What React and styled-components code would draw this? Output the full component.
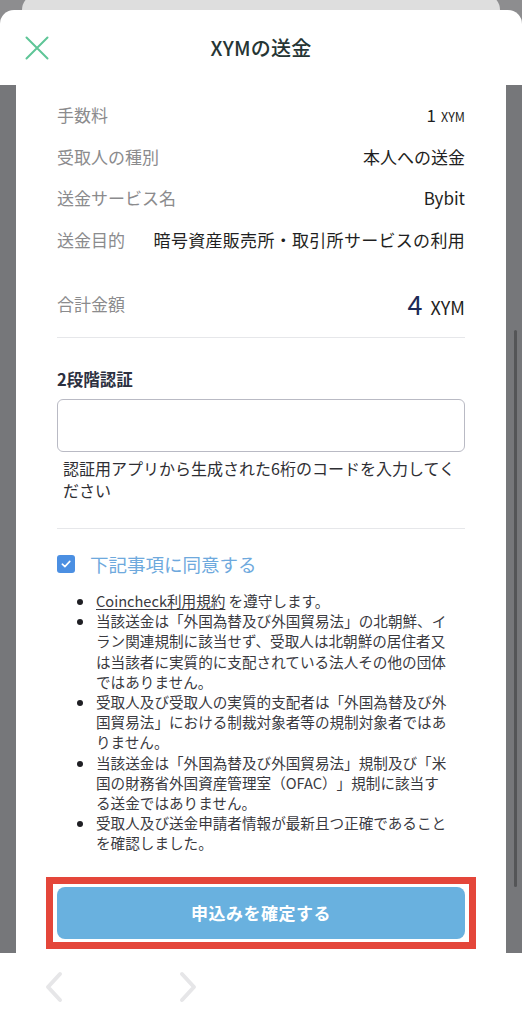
import React from "react";
import styled, { createGlobalStyle } from "styled-components";

const Global = createGlobalStyle`
  html, body { margin: 0; padding: 0; }
  body {
    font-family: "Noto Sans CJK JP", "Noto Sans", sans-serif;
    background: #8d8d8f;
    -webkit-font-smoothing: antialiased;
    text-spacing-trim: space-all;
  }
  * { box-sizing: border-box; }
`;

const Screen = styled.div`
  width: 522px;
  height: 1024px;
  overflow: hidden;
  display: flex;
  flex-direction: column;
  background: #8d8d8f;
`;

const Peek = styled.div`
  margin: -6px 22px 0;
  height: 16px;
  flex: none;
  background: #dedede;
  border-radius: 16px 16px 0 0;
`;

const Sheet = styled.div`
  flex: 1;
  display: flex;
  flex-direction: column;
  background: #fff;
  border-radius: 14px 14px 0 0;
  overflow: hidden;
`;

const Header = styled.header`
  height: 75px;
  flex: none;
  display: grid;
  grid-template-columns: 72px 1fr 72px;
  align-items: center;
`;

const CloseBtn = styled.button`
  border: 0;
  background: none;
  padding: 0 0 0 25px;
  display: flex;
  align-items: center;
  height: 100%;
  cursor: pointer;
`;

const Title = styled.h1`
  margin: 0;
  text-align: center;
  font-size: 20px;
  font-weight: 500;
  color: #263534;
  letter-spacing: 0.2px;
`;

const Body = styled.div`
  flex: 1;
  display: flex;
  min-height: 0;
`;

const Gutter = styled.div`
  width: 16px;
  flex: none;
  background: #76777a;
  position: relative;
`;

const ScrollThumb = styled.div`
  position: absolute;
  left: 8px;
  top: 245px;
  width: 3px;
  height: 557px;
  border-radius: 2px;
  background: #545557;
`;

const Content = styled.main`
  flex: 1;
  background: #fff;
  padding: 9px 41px 0;
  display: flex;
  flex-direction: column;
`;

const Row = styled.div`
  height: 41.5px;
  display: flex;
  align-items: center;
  justify-content: space-between;
  gap: 20px;
  font-size: 17px;
`;

const Label = styled.span`
  color: #8b8b8d;
  white-space: nowrap;
`;

const Value = styled.span`
  color: #1f1f22;
  white-space: nowrap;
  letter-spacing: ${(p) => (p.$tight ? "0.3px" : "0")};
`;

const Num = styled.span`
  font-size: ${(p) => p.$size || 17}px;
  color: ${(p) => p.$color || "#1f1f22"};
`;

const Unit = styled.span`
  font-size: ${(p) => p.$size || 12.5}px;
  margin-left: ${(p) => p.$gap || 5}px;
  color: #1f1f22;
`;

const TotalRow = styled(Row)`
  margin-top: 22px;
  height: 42px;
`;

const Divider = styled.hr`
  margin: ${(p) => p.$m || "13px 0 0"};
  border: 0;
  border-top: 1.5px solid #e6e7ea;
`;

const SectionTitle = styled.h2`
  margin: 29px 0 0;
  font-size: 16.5px;
  font-weight: 700;
  color: #2c3040;
  line-height: 24px;
`;

const CodeInput = styled.input`
  margin-top: 8px;
  height: 53px;
  width: 100%;
  border: 1.2px solid #b9bac4;
  border-radius: 6px;
  font-size: 17px;
  padding: 0 12px;
  outline: none;
`;

const Helper = styled.p`
  margin: 5px 0 0;
  padding: 0 6px;
  font-size: 16px;
  line-height: 22px;
  color: #2e2e33;
`;

const Agree = styled.label`
  margin-top: 20px;
  display: flex;
  align-items: center;
  gap: 15px;
  font-size: 18.5px;
  color: #6ea9dd;
  height: 30px;
`;

const Check = styled.span`
  width: 18px;
  height: 18px;
  border-radius: 3px;
  background: #4b8fe2;
  display: flex;
  align-items: center;
  justify-content: center;
  flex: none;
`;

const Terms = styled.ul`
  list-style: none;
  margin: 12px 0 0;
  padding: 0 0 0 20px;
  font-size: 14.6px;
  line-height: 20.2px;
  color: #3a3a3f;
`;

const Item = styled.li`
  display: flex;
  gap: 13px;
`;

const Dot = styled.span`
  width: 6px;
  height: 6px;
  border-radius: 50%;
  background: #1f1f24;
  flex: none;
  margin-top: 8px;
`;

const ItemText = styled.span`
  width: 24.02em;
`;

const Link = styled.a`
  color: inherit;
  text-decoration: underline;
  text-underline-offset: 2px;
`;

const Highlight = styled.div`
  margin: 23px -11px 0;
  border: 7px solid #e4463a;
  padding: 3px 4px;
`;

const Submit = styled.button`
  width: 100%;
  height: 52px;
  border: 0;
  border-radius: 8px;
  background: #69b1df;
  color: #fff;
  font-family: inherit;
  font-size: 17px;
  font-weight: 700;
  letter-spacing: 0.5px;
  cursor: pointer;
`;

const Footer = styled.footer`
  height: 71px;
  flex: none;
  background: #fff;
  display: flex;
  align-items: center;
  gap: 112px;
  padding: 0 0 4px 43px;
`;

const NavBtn = styled.button`
  border: 0;
  background: none;
  padding: 0;
  display: flex;
`;

const CloseIcon = () => (
  <svg width="24" height="24" viewBox="0 0 24 24" fill="none">
    <path d="M1.5 1.5 L22.5 22.5 M22.5 1.5 L1.5 22.5" stroke="#5ec597" strokeWidth="2" strokeLinecap="round" />
  </svg>
);

const CheckIcon = () => (
  <svg width="12" height="12" viewBox="0 0 12 12" fill="none">
    <path d="M2.3 6.2 L4.9 8.6 L9.8 3.4" stroke="#fff" strokeWidth="1.6" strokeLinecap="round" strokeLinejoin="round" />
  </svg>
);

const Chevron = ({ dir }) => (
  <svg width="22" height="32" viewBox="0 0 22 32" fill="none">
    <path
      d={dir === "left" ? "M17 3 L5 16 L17 29" : "M5 3 L17 16 L5 29"}
      stroke="#e6e6e8"
      strokeWidth="4"
      strokeLinecap="round"
      strokeLinejoin="round"
    />
  </svg>
);

const terms = [
  <>
    <Link>Coincheck利用規約</Link> を遵守します。
  </>,
  "当該送金は「外国為替及び外国貿易法」の北朝鮮、イラン関連規制に該当せず、受取人は北朝鮮の居住者又は当該者に実質的に支配されている法人その他の団体ではありません。",
  "受取人及び受取人の実質的支配者は「外国為替及び外国貿易法」における制裁対象者等の規制対象者ではありません。",
  "当該送金は「外国為替及び外国貿易法」規制及び「米国の財務省外国資産管理室（OFAC）」規制に該当する送金ではありません。",
  "受取人及び送金申請者情報が最新且つ正確であることを確認しました。",
];

export default function App() {
  return (
    <>
      <Global />
      <Screen>
        <Peek />
        <Sheet>
          <Header>
            <CloseBtn aria-label="閉じる">
              <CloseIcon />
            </CloseBtn>
            <Title>XYMの送金</Title>
            <span />
          </Header>
          <Body>
            <Gutter />
            <Content>
              <Row>
                <Label>手数料</Label>
                <Value>
                  <Num>1</Num>
                  <Unit>XYM</Unit>
                </Value>
              </Row>
              <Row>
                <Label>受取人の種別</Label>
                <Value>本人への送金</Value>
              </Row>
              <Row>
                <Label>送金サービス名</Label>
                <Value>Bybit</Value>
              </Row>
              <Row>
                <Label>送金目的</Label>
                <Value $tight>暗号資産販売所・取引所サービスの利用</Value>
              </Row>
              <TotalRow>
                <Label>合計金額</Label>
                <Value>
                  <Num $size={27} $color="#1d2a57">4</Num>
                  <Unit $size={18} $gap={8}>XYM</Unit>
                </Value>
              </TotalRow>
              <Divider />
              <SectionTitle>2段階認証</SectionTitle>
              <CodeInput inputMode="numeric" />
              <Helper>認証用アプリから生成された6桁のコードを入力してください</Helper>
              <Divider $m="27px 0 0" />
              <Agree>
                <Check>
                  <CheckIcon />
                </Check>
                下記事項に同意する
              </Agree>
              <Terms>
                {terms.map((t, i) => (
                  <Item key={i}>
                    <Dot />
                    <ItemText>{t}</ItemText>
                  </Item>
                ))}
              </Terms>
              <Highlight>
                <Submit>申込みを確定する</Submit>
              </Highlight>
            </Content>
            <Gutter>
              <ScrollThumb />
            </Gutter>
          </Body>
          <Footer>
            <NavBtn aria-label="戻る">
              <Chevron dir="left" />
            </NavBtn>
            <NavBtn aria-label="進む">
              <Chevron dir="right" />
            </NavBtn>
          </Footer>
        </Sheet>
      </Screen>
    </>
  );
}
